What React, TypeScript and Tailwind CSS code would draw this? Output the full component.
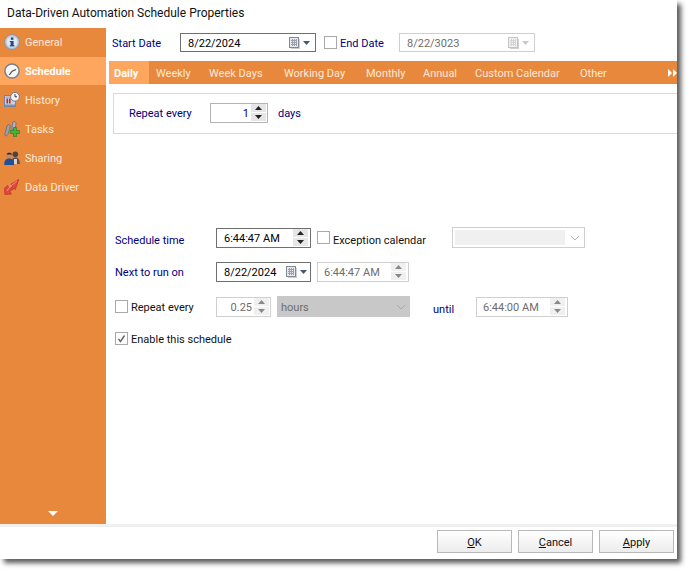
import React from "react";

const blue = "text-[#000080]";
const tx = "pt-[2px]";

function CalIcon({ disabled }: { disabled?: boolean }) {
  const c = disabled ? "#c4c4c4" : "#7f8a96";
  return (
    <span className="flex items-center gap-[3px]">
      <svg width="11" height="12" viewBox="0 0 11 12">
        <rect x="0.5" y="0.5" width="9" height="10" fill={disabled ? "#f1f1f1" : "#e8e8ee"} stroke={c} />
        <rect x="10" y="2" width="1" height="10" fill="#d0d0d0" />
        <rect x="2" y="11" width="9" height="1" fill="#d0d0d0" />
        <path d="M2 3.5H8M2 5.5H8M2 7.5H8M3.5 2V9M5.5 2V9M7.5 2V9" stroke={disabled ? "#d4d4d4" : "#9aa3ad"} strokeWidth="1" />
      </svg>
      <svg width="7" height="4" viewBox="0 0 7 4"><path d="M0 0H7L3.5 4Z" fill={disabled ? "#c8c8c8" : "#44586f"} /></svg>
    </span>
  );
}

function Spin({ disabled }: { disabled?: boolean }) {
  const c = disabled ? "#8a8a8a" : "#222";
  return (
    <span className="flex flex-col w-[15px] shrink-0 gap-[1px]">
      <span className={`flex items-center justify-center h-[8px] ${disabled ? "bg-[#f0f0f0]" : "bg-[#e6e6e6]"}`}>
        <svg width="7" height="4" viewBox="0 0 7 4"><path d="M3.5 0L7 4H0Z" fill={c} /></svg>
      </span>
      <span className={`flex items-center justify-center h-[8px] ${disabled ? "bg-[#f0f0f0]" : "bg-[#e6e6e6]"}`}>
        <svg width="7" height="4" viewBox="0 0 7 4"><path d="M0 0H7L3.5 4Z" fill={c} /></svg>
      </span>
    </span>
  );
}

function Check({ checked }: { checked?: boolean }) {
  return (
    <span className="w-[13px] h-[13px] border border-[#a9a9a9] bg-white shrink-0 flex items-center justify-center">
      {checked && (
        <svg width="9" height="9" viewBox="0 0 9 9"><path d="M1.5 5L3.5 7.5L7.5 1.5" fill="none" stroke="#666" strokeWidth="1.4" /></svg>
      )}
    </span>
  );
}

function Chevron({ color }: { color: string }) {
  return (
    <svg width="10" height="6" viewBox="0 0 10 6"><path d="M1 1L5 5L9 1" fill="none" stroke={color} strokeWidth="1" /></svg>
  );
}

const InfoIcon = () => (
  <svg width="16" height="16" viewBox="0 0 16 16">
    <circle cx="8" cy="8" r="7.4" fill="#bccbdb" stroke="#7d8b9a" strokeWidth="0.8" />
    <circle cx="8" cy="8" r="5.4" fill="#dfe7ef" />
    <rect x="6.6" y="7" width="3" height="5" fill="#1f4a86" />
    <rect x="5.8" y="11.2" width="4.6" height="1.2" fill="#1f4a86" />
    <rect x="5.8" y="7" width="2" height="1" fill="#1f4a86" />
    <rect x="6.8" y="3.4" width="2.6" height="2.4" fill="#1f4a86" />
  </svg>
);
const ClockIcon = () => (
  <svg width="16" height="16" viewBox="0 0 16 16">
    <circle cx="8" cy="8" r="7.1" fill="#f6f6f6" stroke="#77808a" strokeWidth="1.5" />
    <path d="M8 8.3L12 6.4M8 8.3L5.2 12" stroke="#444" strokeWidth="1.1" fill="none" />
  </svg>
);
const HistoryIcon = () => (
  <svg width="16" height="16" viewBox="0 0 16 16">
    <rect x="0.5" y="3.5" width="11" height="11" fill="#c9d3e6" stroke="#7384a1" />
    <rect x="1.5" y="4.5" width="9" height="1.5" fill="#e39f9a" />
    <rect x="2.5" y="6.5" width="1.6" height="5" fill="#c8261f" />
    <rect x="5" y="6.5" width="1.6" height="5" fill="#c8261f" />
    <rect x="1" y="12.5" width="10" height="1.5" fill="#7d93b8" />
    <circle cx="11" cy="4.8" r="4.4" fill="#f2f3f6" stroke="#6e7b8e" />
    <path d="M11 4.8V2.2M11 4.8H13" stroke="#333" fill="none" />
  </svg>
);
const TasksIcon = () => (
  <svg width="16" height="16" viewBox="0 0 16 16">
    <path d="M4.5 3.5C6 3.5 6.6 5 6 7.5C5.6 9.5 4.6 10 4.2 12.5C3.8 15 1.5 15.5 1 14C0.5 12.5 1.5 11 2 9C2.6 6.5 3 3.5 4.5 3.5Z" fill="#98a2ae" stroke="#59636f" strokeWidth="0.7" />
    <path d="M10 0.5C11.7 0.5 12.4 2 11.8 4.5L10.8 7.5L8 8.5L8 7C8.3 5 8.3 0.5 10 0.5Z" fill="#aab3bf" stroke="#5d6672" strokeWidth="0.7" />
    <path d="M9.5 6.5h3v3h3.2v3h-3.2v3.2h-3v-3.2H6.3v-3h3.2z" fill="#44b23a" stroke="#1e7a1b" strokeWidth="0.6" />
  </svg>
);
const SharingIcon = () => (
  <svg width="16" height="14" viewBox="0 0 16 14">
    <circle cx="11.3" cy="3.2" r="2.8" fill="#4a4442" />
    <path d="M7.5 13C7.5 8 9 6.6 11.3 6.6S15.8 8 15.8 13Z" fill="#58504c" />
    <rect x="10" y="8" width="3" height="5" fill="#d7d2cc" />
    <circle cx="5.2" cy="4.2" r="2.7" fill="#c08b64" />
    <path d="M2.6 3.6C3 1 7.6 1 8 3.6Z" fill="#2c2624" />
    <path d="M0.2 14C0.2 9 2.4 7.6 5.2 7.6S10 9 10 14Z" fill="#1f4f9a" />
  </svg>
);
const DriverIcon = () => (
  <svg width="15" height="16" viewBox="0 0 15 16">
    <path d="M14.6 0.5L7 5.2L8.6 7.6L5.2 9.8L3.8 6.6L0.6 9L0.9 15.5L7.4 15L5.6 12.4L10.4 9.4L11.4 10.6Z" fill="#e5473a" stroke="#b83127" strokeWidth="0.7" />
    <path d="M13 2L6 7.5L3 12" stroke="#f6a39b" strokeWidth="0.8" fill="none" />
  </svg>
);

const nav: [string, React.ReactNode][] = [
  ["General", <InfoIcon />],
  ["Schedule", <ClockIcon />],
  ["History", <HistoryIcon />],
  ["Tasks", <TasksIcon />],
  ["Sharing", <SharingIcon />],
  ["Data Driver", <DriverIcon />],
];

const tabs = ["Daily", "Weekly", "Week Days", "Working Day", "Monthly", "Annual", "Custom Calendar", "Other"];
const tabW = ["w-[40px] mr-[2px]", "w-[53px]", "w-[75px]", "w-[82px]", "w-[57px]", "w-[52px]", "w-[105px]", "w-[40px]"];

export default function App() {
  return (
    <div className="w-[691px] h-[574px] bg-white overflow-hidden text-[11px] leading-[14px] text-black" style={{ fontFamily: 'Roboto, "Noto Sans", sans-serif' }}>
      <div className="w-[677px] h-[559px] flex flex-col bg-white shadow-[4px_4px_5px_rgba(0,0,0,0.65)]">
        <div className="h-[28px] shrink-0 pl-[7px] pt-[6px] text-[12px] leading-[14px] text-[#111]">Data-Driven Automation Schedule Properties</div>

        <div className="flex flex-1 min-h-0">
          <aside className="w-[106px] shrink-0 bg-[#e8883c] flex flex-col">
            {nav.map(([label, icon], i) => (
              <div key={label} className={`h-[28px] mb-[1px] flex items-center pl-[4px] ${i === 1 ? "bg-[#ffa65e] font-bold text-white" : "text-[#fbe9da]"}`}>
                <span className="w-[21px] flex shrink-0">{icon}</span>
                <span className={tx}>{label}</span>
              </div>
            ))}
            <div className="mt-auto mb-[8px] flex justify-center">
              <svg width="10" height="5" viewBox="0 0 10 5"><path d="M0 0H10L5 5Z" fill="#fff" /></svg>
            </div>
          </aside>

          <main className="flex-1 min-w-0 overflow-hidden flex flex-col">
            <div className="flex items-center h-[19px] mt-[5px] pl-[6px]">
              <span className={`${blue} ${tx} w-[68px] shrink-0`}>Start Date</span>
              <div className="w-[136px] h-[19px] border border-[#707070] flex items-center justify-between pl-[7px] pr-[5px]">
                <span className={tx}>8/22/2024</span>
                <CalIcon />
              </div>
              <span className="ml-[8px]"><Check /></span>
              <span className={`ml-[3px] w-[59px] shrink-0 ${tx} ${blue}`}>End Date</span>
              <div className="w-[136px] h-[19px] border border-[#cfcfcf] flex items-center justify-between pl-[7px] pr-[5px] text-[#6d6d6d]">
                <span className={tx}>8/22/3023</span>
                <CalIcon disabled />
              </div>
            </div>

            <div className="h-[23px] ml-[3px] mt-[9px] bg-[#e8883c] flex items-stretch relative shrink-0">
              {tabs.map((t, i) => (
                <div key={t} className={`${tabW[i]} shrink-0 flex items-center pl-[5px] pt-[2px] whitespace-nowrap ${i === 0 ? "bg-[#ffa65e] font-bold text-white" : "text-[#fbe9da]"}`}>{t}</div>
              ))}
              <svg className="absolute right-0 top-[8px]" width="9" height="8" viewBox="0 0 9 8"><path d="M0 0L4 4L0 8ZM5 0L9 4L5 8Z" fill="#fff" /></svg>
            </div>

            <div className="ml-[7px] mr-[-4px] mt-[9px] h-[41px] border border-[#d9d9d9] flex items-center pl-[15px] pb-[2px] shrink-0">
              <span className={`${blue} ${tx} w-[81px] shrink-0`}>Repeat every</span>
              <div className="w-[58px] h-[20px] border border-[#b4b4b4] flex items-center justify-end pr-[1px]">
                <span className={`${blue} ${tx} pr-[2px]`}>1</span>
                <Spin />
              </div>
              <span className={`${blue} ${tx} ml-[10px]`}>days</span>
            </div>

            <div className="mt-[93px] pl-[9px] flex items-center h-[21px]">
              <span className={`${blue} w-[101px] shrink-0 pt-[6px]`}>Schedule time</span>
              <div className="w-[95px] h-[20px] border border-[#707070] flex items-center justify-between pl-[7px] pr-[2px]">
                <span className={tx}>6:44:47 AM</span>
                <Spin />
              </div>
              <span className="ml-[6px]"><Check /></span>
              <span className="ml-[3px] w-[119px] shrink-0 text-[#111] pt-[6px]">Exception calendar</span>
              <div className="w-[133px] h-[21px] border border-[#cfcfcf] flex items-center justify-between pl-[2px] pr-[4px]">
                <span className="w-[110px] h-[15px] bg-[#f0f0f0]" />
                <Chevron color="#b5b5b5" />
              </div>
            </div>

            <div className="mt-[13px] pl-[9px] flex items-center h-[21px]">
              <span className={`${blue} ${tx} w-[101px] shrink-0`}>Next to run on</span>
              <div className="w-[95px] h-[20px] border border-[#707070] flex items-center justify-between pl-[7px] pr-[3px]">
                <span className={tx}>8/22/2024</span>
                <CalIcon />
              </div>
              <div className="ml-[6px] w-[92px] h-[20px] border border-[#cfcfcf] flex items-center justify-between pl-[6px] pr-[2px] text-[#6d6d6d]">
                <span className={tx}>6:44:47 AM</span>
                <Spin disabled />
              </div>
            </div>

            <div className="mt-[14px] pl-[9px] flex items-center h-[21px]">
              <Check />
              <span className={`ml-[3px] w-[85px] shrink-0 ${tx} text-[#111]`}>Repeat every</span>
              <div className="w-[55px] h-[20px] border border-[#cfcfcf] flex items-center justify-end pr-[1px] text-[#6d6d6d]">
                <span className={`${tx} pr-[2px]`}>0.25</span>
                <Spin disabled />
              </div>
              <div className="ml-[6px] w-[133px] h-[21px] bg-[#c8c8c8] flex items-center justify-between pl-[4px] pr-[4px] text-[#6d6d6d]">
                <span className={tx}>hours</span>
                <Chevron color="#a9a9a9" />
              </div>
              <span className={`${blue} ml-[23px] w-[43px] shrink-0 pt-[6px]`}>until</span>
              <div className="w-[92px] h-[20px] border border-[#cfcfcf] flex items-center justify-between pl-[6px] pr-[2px] text-[#6d6d6d]">
                <span className={tx}>6:44:00 AM</span>
                <Spin disabled />
              </div>
            </div>

            <div className="mt-[13px] pl-[9px] flex items-center h-[17px]">
              <Check checked />
              <span className={`ml-[3px] ${tx} text-[#111]`}>Enable this schedule</span>
            </div>
          </main>
        </div>

        <div className="h-[35px] shrink-0 border-t-[3px] border-[#f0f0f0] flex items-start justify-end gap-[6px] pt-[3px] pr-[3px]">
          {[["O", "K"], ["C", "ancel"], ["A", "pply"]].map(([u, r]) => (
            <div key={r} className="w-[75px] h-[23px] border border-[#b9b9b9] bg-gradient-to-b from-white to-[#ececec] flex items-center justify-center text-[#111]">
              <span className={tx}><span className="underline">{u}</span>{r}</span>
            </div>
          ))}
        </div>
      </div>
    </div>
  );
}
